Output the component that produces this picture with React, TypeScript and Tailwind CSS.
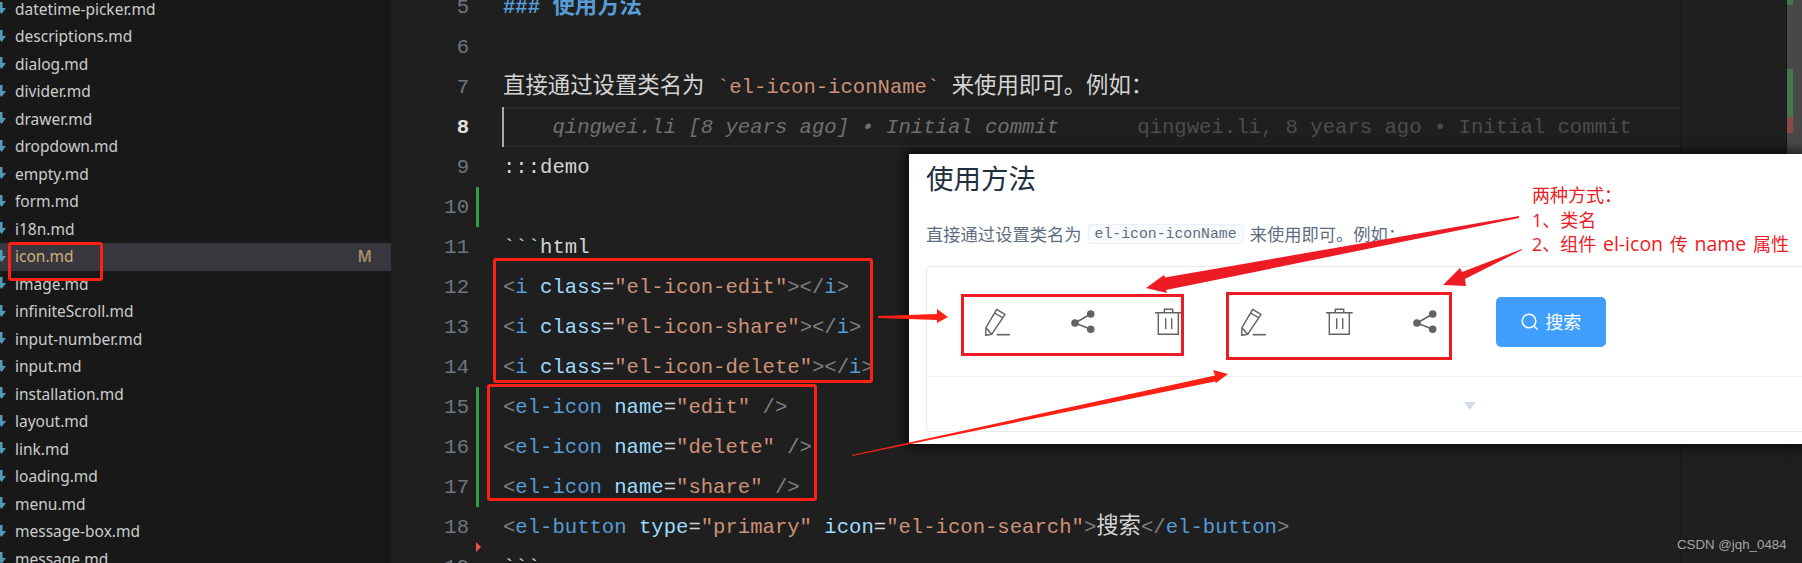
const files = [
  "datetime-picker.md",
  "descriptions.md",
  "dialog.md",
  "divider.md",
  "drawer.md",
  "dropdown.md",
  "empty.md",
  "form.md",
  "i18n.md",
  "icon.md",
  "image.md",
  "infiniteScroll.md",
  "input-number.md",
  "input.md",
  "installation.md",
  "layout.md",
  "link.md",
  "loading.md",
  "menu.md",
  "message-box.md",
  "message.md",
];

const cjk = "text-[22.4px] leading-none font-['Noto_Sans_CJK_SC',sans-serif]";

function G({ children }: { children: React.ReactNode }) {
  return <span className="text-[#808080]">{children}</span>;
}
function T({ children }: { children: React.ReactNode }) {
  return <span className="text-[#569cd6]">{children}</span>;
}
function A({ children }: { children: React.ReactNode }) {
  return <span className="text-[#9cdcfe]">{children}</span>;
}
function S({ children }: { children: React.ReactNode }) {
  return <span className="text-[#ce9178]">{children}</span>;
}

function ITag({ name }: { name: string }) {
  return (
    <>
      <G>&lt;</G>
      <T>i</T> <A>class</A>=<S>"el-icon-{name}"</S>
      <G>&gt;&lt;/</G>
      <T>i</T>
      <G>&gt;</G>
    </>
  );
}

function ElIcon({ name }: { name: string }) {
  return (
    <>
      <G>&lt;</G>
      <T>el-icon</T> <A>name</A>=<S>"{name}"</S> <G>/&gt;</G>
    </>
  );
}

const lines: { n: number; content: React.ReactNode }[] = [
  {
    n: 5,
    content: (
      <span className="font-bold text-[#569cd6]">
        ### <span className={cjk}>使用方法</span>
      </span>
    ),
  },
  { n: 6, content: null },
  {
    n: 7,
    content: (
      <>
        <span className={cjk}>直接通过设置类名为</span> <S>`el-icon-iconName`</S>{" "}
        <span className={cjk}>来使用即可。例如：</span>
      </>
    ),
  },
  {
    n: 8,
    content: (
      <>
        <span className="italic text-[#6f6f6f]">{"    "}qingwei.li [8 years ago] • Initial commit</span>
        <span className="ml-[4px] text-[#4c4c4c]">{"      "}qingwei.li, 8 years ago • Initial commit</span>
      </>
    ),
  },
  { n: 9, content: ":::demo" },
  { n: 10, content: null },
  { n: 11, content: "```html" },
  { n: 12, content: <ITag name="edit" /> },
  { n: 13, content: <ITag name="share" /> },
  { n: 14, content: <ITag name="delete" /> },
  { n: 15, content: <ElIcon name="edit" /> },
  { n: 16, content: <ElIcon name="delete" /> },
  { n: 17, content: <ElIcon name="share" /> },
  {
    n: 18,
    content: (
      <>
        <G>&lt;</G>
        <T>el-button</T> <A>type</A>=<S>"primary"</S> <A>icon</A>=<S>"el-icon-search"</S>
        <G>&gt;</G>
        <span className={cjk}>搜索</span>
        <G>&lt;/</G>
        <T>el-button</T>
        <G>&gt;</G>
      </>
    ),
  },
  { n: 19, content: "```" },
];

function MdIcon() {
  return (
    <svg width="6" height="14" viewBox="0 0 6 14" className="shrink-0">
      <path d="M0 0h2.5v6H6L1.5 12 0 10z" fill="#519aba" />
    </svg>
  );
}

function PencilIcon() {
  return (
    <svg width="26" height="28" viewBox="0 0 26 28" fill="none" stroke="#606266" strokeWidth="1.4">
      <path d="M11.7 1.3 20 6.3 6.7 26.3.7 27.3 1 19.7Z" strokeLinejoin="round" />
      <path d="M9.3 5 17.7 9.7M1 19.7 6.7 26.3" />
      <path d="M11.7 26.7H25" strokeWidth="1.6" />
    </svg>
  );
}

function ShareIcon() {
  return (
    <svg width="24" height="24" viewBox="0 0 24 24" fill="#606266" stroke="#606266" strokeWidth="1.6">
      <path d="M4 13 19.7 4M4 13 19.7 19.3" fill="none" />
      <circle cx="4" cy="13" r="3" />
      <circle cx="19.7" cy="4" r="3" />
      <circle cx="19.7" cy="19.3" r="3" />
    </svg>
  );
}

function TrashIcon() {
  return (
    <svg width="28" height="28" viewBox="0 0 28 28" fill="none" stroke="#606266" strokeWidth="1.4">
      <path d="M1 4.7H27.7M10.3 4.7V1.3H18.7V4.7M4.3 4.7V26.3H24.3V4.7M11.7 10.3V21M17.7 10.3V21" />
    </svg>
  );
}

function IconSlot({ children }: { children: React.ReactNode }) {
  return <div className="flex w-[85.4px] shrink-0 items-center justify-center">{children}</div>;
}

function RedBox({ className }: { className: string }) {
  return <div className={`absolute border-[3px] border-[#ed1c24] ${className}`} />;
}

export default function App() {
  return (
    <div className="relative flex h-[563px] w-[1802px] overflow-hidden bg-[#1f1f1f]">
      {/* file tree */}
      <div className="w-[391px] shrink-0 overflow-hidden bg-[#181818] font-['Noto_Sans',sans-serif] text-[15.5px] text-[#cccccc]">
        <div className="-mt-[4.5px]">
          {files.map((f) => (
            <div
              key={f}
              className={`flex h-[27.5px] items-center ${f === "icon.md" ? "bg-[#37373d] text-[#d2b078]" : ""}`}
            >
              <MdIcon />
              <span className="ml-[9px] flex-1">{f}</span>
              {f === "icon.md" && <span className="mr-[19px] font-semibold text-[#a8906a]">M</span>}
            </div>
          ))}
        </div>
      </div>

      {/* editor */}
      <div className="flex flex-1 overflow-hidden font-['Liberation_Mono',monospace] text-[20.6px] text-[#d4d4d4]">
        <div className="-mt-[13px] w-[78px] shrink-0">
          {lines.map((l) => (
            <div key={l.n} className={`h-10 text-right leading-[42px] ${l.n === 8 ? "font-bold text-[#e0e0e0]" : "text-[#6e7681]"}`}>
              {l.n}
            </div>
          ))}
        </div>
        <div className="-mt-[13px] w-[1211px] shrink-0">
          {lines.map((l) => (
            <div key={l.n} className="flex h-10">
              <div className="flex w-[34px] shrink-0 justify-start pl-[7px]">
                {(l.n === 10 || (l.n >= 15 && l.n <= 17)) && <div className="h-10 w-[3px] bg-[#2ea043]" />}
              </div>
              <div
                className={`flex-1 whitespace-pre ${l.n === 8 ? "border-y-2 border-[#282828] leading-[38px]" : "leading-[42px]"}`}
              >
                {l.n === 8 && <span className="absolute left-[502px] top-[107px] h-10 w-[2px] bg-[#aaaaaa]" />}
                {l.content}
              </div>
            </div>
          ))}
        </div>
        <div className="flex-1 border-l border-[#191919]" />
        <div className="relative w-[16px] shrink-0 border-l border-[#191919]">
          <div className="h-[300px] bg-[#484848]" />
          <div className="absolute left-0 top-0 h-[5px] w-[6px] bg-[#44774d]" />
          <div className="absolute left-0 top-[69px] h-[48px] w-[6px] bg-[#44774d]" />
          <div className="absolute left-0 top-[117px] h-[16px] w-[6px] bg-[#8a4a4a]" />
        </div>
      </div>

      {/* fold marker */}
      <svg width="5" height="10" viewBox="0 0 5 10" className="absolute left-[476px] top-[542px]">
        <path d="M0 0 5 5 0 10Z" fill="#f14c4c" />
      </svg>

      {/* screenshot of the docs page pasted on top */}
      <div className="absolute bottom-[119px] left-[909px] right-0 top-[154px] bg-white pl-[17px] font-['Noto_Sans_CJK_SC',sans-serif] shadow-[0_0_10px_4px_rgba(0,0,0,0.6)]">
        <h3 className="mt-[7px] text-[27.5px] leading-[32px] text-[#1f2f3d]">使用方法</h3>
        <p className="mt-[31px] flex h-[20px] items-center text-[17.3px] text-[#5e6d82]">
          直接通过设置类名为
          <code className="mx-[6px] flex h-[20px] items-center rounded-[3px] border border-[#eaeefb] bg-[#f9fafc] px-[6px] font-['Liberation_Mono',monospace] text-[14.8px]">
            el-icon-iconName
          </code>
          来使用即可。例如：
        </p>
        <div className="mt-[22px] h-[166px] rounded-l-[4px] border border-r-0 border-[#ebebeb]">
          <div className="flex h-[110px] items-center border-b border-[#eaeefb] pl-[28px]">
            <IconSlot><PencilIcon /></IconSlot>
            <IconSlot><ShareIcon /></IconSlot>
            <IconSlot><TrashIcon /></IconSlot>
            <IconSlot><PencilIcon /></IconSlot>
            <IconSlot><TrashIcon /></IconSlot>
            <IconSlot><ShareIcon /></IconSlot>
            <button className="ml-[29px] flex h-[50px] w-[110px] items-center justify-center gap-[6px] rounded-[5px] bg-[#409eff] text-[18px] text-white">
              <svg width="18" height="18" viewBox="0 0 18 18" fill="none" stroke="white" strokeWidth="1.5">
                <circle cx="8" cy="8" r="6.8" />
                <path d="M13 13 16.5 16.5" />
              </svg>
              搜索
            </button>
          </div>
          <div className="flex h-[54px] items-center pl-[537px] pt-[4px]">
            <div className="h-0 w-0 border-x-[6px] border-t-[8px] border-x-transparent border-t-[#d3dce6]" />
          </div>
        </div>
      </div>

      {/* annotation note */}
      <div className="absolute left-[1532px] top-[183px] whitespace-nowrap font-['Open_Sans','Noto_Sans_CJK_SC',sans-serif] text-[18px] leading-[24.5px] text-[#ed1c24] [word-spacing:2px]">
        <div>两种方式：</div>
        <div>1、类名</div>
        <div>
          2、组件 <span className="text-[19.5px] leading-none">el-icon</span> 传 <span className="text-[19.5px] leading-none">name</span> 属性
        </div>
      </div>

      {/* red frames */}
      <RedBox className="left-[8px] top-[242px] h-[39px] w-[95px] rounded-[3px] border-[#ff2015]" />
      <RedBox className="left-[493px] top-[258px] h-[125px] w-[380px] rounded-[3px] border-[#ff2015]" />
      <RedBox className="left-[487px] top-[384px] h-[117px] w-[330px] rounded-[3px] border-[#ff2015]" />
      <RedBox className="left-[961px] top-[294px] h-[62px] w-[223px] border-[2px]" />
      <RedBox className="left-[1226px] top-[292px] h-[68px] w-[226px] border-[2px]" />

      {/* arrows */}
      <svg width="1802" height="563" viewBox="0 0 1802 563" className="pointer-events-none absolute left-0 top-0">
        <path d="M1519 216 1165 277.5 1164 275 1146 288 1167 293 1166 290 1519 218Z" fill="#ed1c24" />
        <path d="M1522 249 1462 272 1460 268 1443 285 1466 286 1465 279 1522 250Z" fill="#ed1c24" />
        <path d="M878 316 937 314 937 309 948 317 937 323 937 320 878 318Z" fill="#ff2015" />
        <path d="M852 455 1215 375.5 1213 370 1228 374 1216 383 1215 381.5 852 456Z" fill="#ff2015" />
      </svg>

      {/* watermark */}
      <div className="absolute left-[1677px] top-[536px] font-['Liberation_Sans',sans-serif] text-[13.3px] leading-[18px] text-[#a5a5a5]">
        CSDN @jqh_0484
      </div>
    </div>
  );
}
